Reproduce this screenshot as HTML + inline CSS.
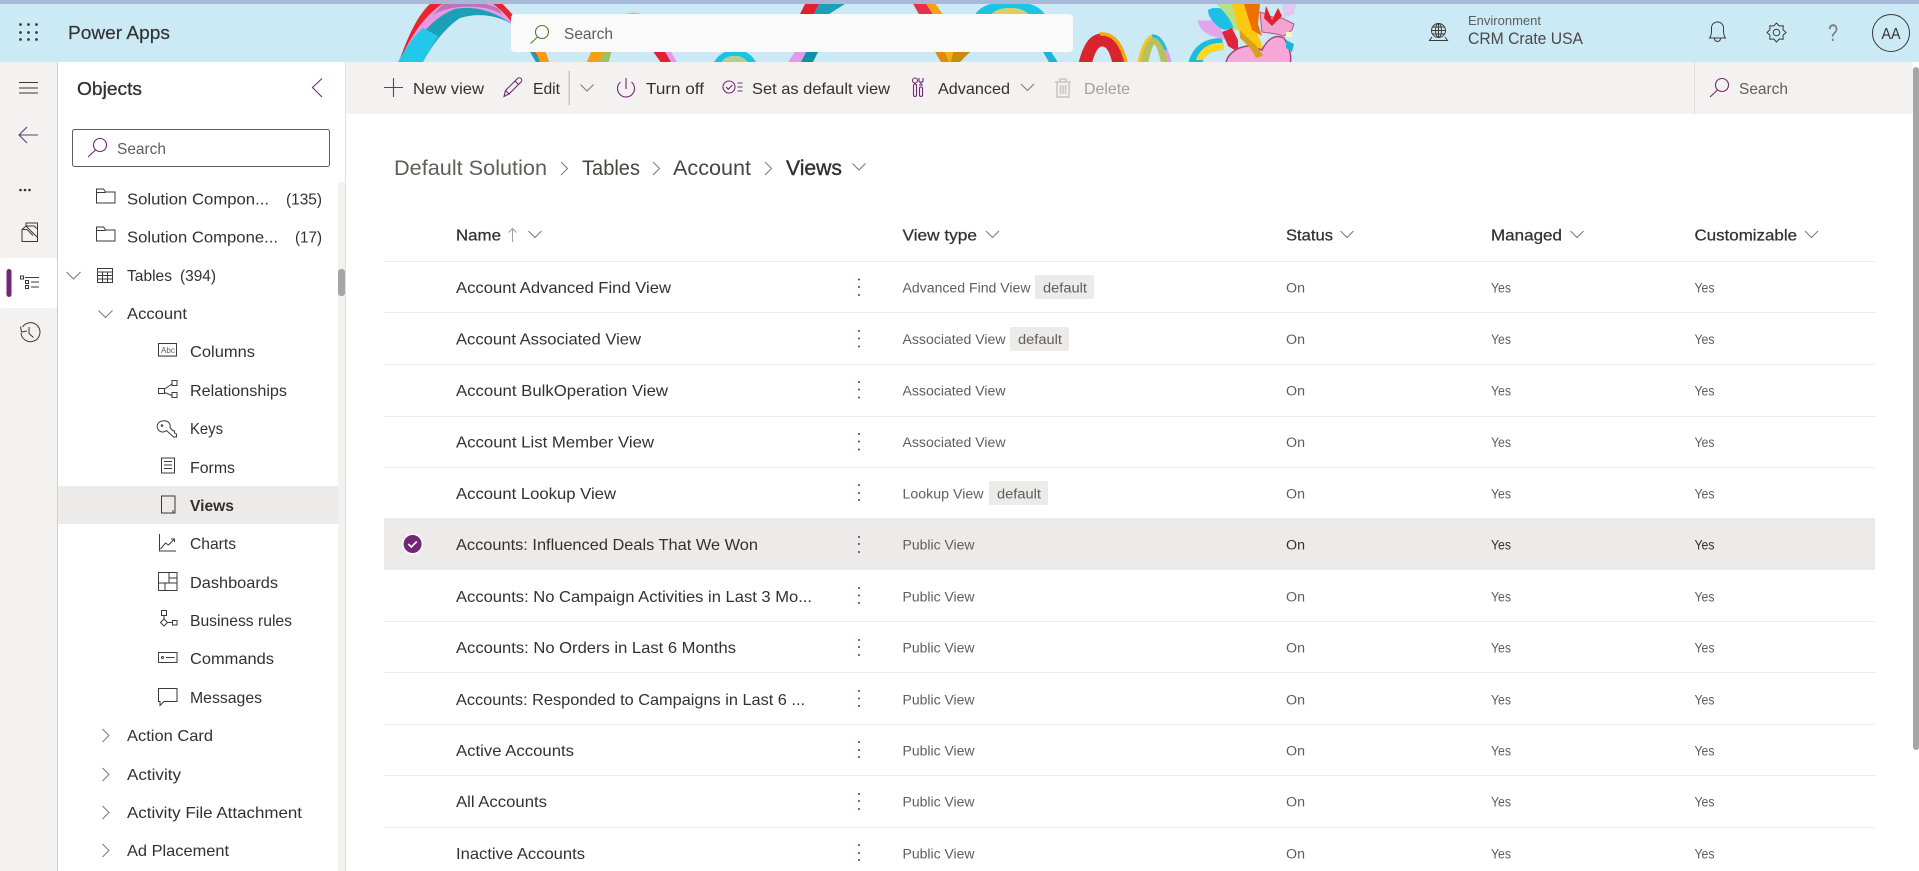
<!DOCTYPE html>
<html lang="en"><head><meta charset="utf-8"><title>Power Apps</title>
<style>
html,body{margin:0;padding:0;background:#fff;width:1919px;height:871px;overflow:hidden}
svg{display:block;font-family:"Liberation Sans",sans-serif}
.n{font-size:16px;fill:#323130}
.v{font-size:13.5px;fill:#605e5c}
.h{font-size:16px;fill:#323130;stroke:#323130;stroke-width:.25}
.t{font-size:16px;fill:#323130}
.i{fill:none;stroke:#3b3a39;stroke-width:1}
.p{fill:none;stroke:#742774;stroke-width:1.1}
.c{fill:none;stroke:#797775;stroke-width:1}
</style></head><body>
<svg width="1919" height="871" viewBox="0 0 1919 871" xmlns="http://www.w3.org/2000/svg">
<defs><clipPath id="hd"><rect x="0" y="4" width="1919" height="58"/></clipPath></defs>
<!-- header -->
<rect width="1919" height="62" fill="#cbeaf6"/>
<rect width="1919" height="4" fill="#a9b7d8"/>
<g clip-path="url(#hd)">
<path d="M396 70C408 35 420 8 438-2L495-2C505 5 520 20 530 45L552 75Z" fill="#e8242c"/>
<path d="M396 70C410 35 425 15 445 2L490 2C500 8 515 22 525 45L552 75Z" fill="#e69ae6"/>
<path d="M432 16C445 6 480 2 502 14L498 8L480 2L445 2Z" fill="#b878b8"/>
<path d="M398 70C412 45 430 18 455 9C475 5 495 12 512 24L552 75Z" fill="#1aa0b8"/>
<path d="M397 64C405 48 415 35 423 28L438 36L422 64Z" fill="#22c8ea"/>
<path d="M422 64C432 45 445 28 460 18C480 12 500 16 515 26L537 64Z" fill="#cbeaf6"/>
<path d="M535 50L541 64L550 64L545 50Z" fill="#ff9a10"/>
<path d="M586 64L592 50L604 50L598 64Z" fill="#f5a010"/><path d="M598 64L604 50L612 50L608 64Z" fill="#9fc060"/>
<path d="M652 50L662 64L674 64L664 50Z" fill="#e02030"/><path d="M672 64L664 50L670 50L678 64Z" fill="#e69ae6"/>
<path d="M622 15C630 12 638 12 644 15Z" fill="#e69ae6"/>
<path d="M713 64C718 54 726 50 735 50C745 50 752 54 757 64L749 64C745 58 741 56 735 56C728 56 723 58 721 64Z" fill="#1cc4e4"/>
<path d="M721 64C723 58 728 56 735 56C741 56 745 58 749 64Z" fill="#b8cf88"/>
<path d="M787 64L796 50L807 50L800 64Z" fill="#e69ae6"/><path d="M800 64L807 50L819 50L812 64Z" fill="#1090a8"/>
<path d="M799 16L806 2L820 2L813 16Z" fill="#e02030"/><path d="M813 16L820 2L848 2L826 16Z" fill="#1aa0b8"/>
<path d="M912 2L925 2L934 16L920 16Z" fill="#e8304c"/><path d="M925 2L934 2L944 16L934 16Z" fill="#f5a010"/>
<path d="M934 50L944 50L950 64L942 64Z" fill="#e08a10"/><path d="M944 50L954 50L950 64Z" fill="#f0b010"/><path d="M954 50L972 50L958 64L950 64Z" fill="#c98a10"/>
<path d="M974 16C980 6 990 2 1010 2C1030 2 1040 6 1046 16L1030 16C1026 10 1018 8 1010 8C1002 8 994 10 990 16Z" fill="#1cc4e4"/>
<path d="M990 16C994 10 1002 8 1010 8C1018 8 1026 10 1030 16Z" fill="#d8d060"/>
<path d="M1042 50L1050 50L1059 64L1050 64Z" fill="#1cb4d0"/>
<!-- small arcs -->
<path d="M1084 68C1089 46 1095 40 1102 40C1110 40 1116 46 1120 68" fill="none" stroke="#d8242c" stroke-width="13"/>
<path d="M1100 34C1114 33 1122 44 1127 66" fill="none" stroke="#f5a810" stroke-width="3.500"/>
<path d="M1143 68C1147 48 1150 40 1154 40C1159 40 1163 50 1166 68" fill="none" stroke="#b8c060" stroke-width="8"/>
<path d="M1152 36C1160 35 1166 46 1171 66" fill="none" stroke="#22bcd8" stroke-width="3"/>
<path d="M1138 66C1142 46 1147 38 1152 36" fill="none" stroke="#f5c820" stroke-width="3"/>
<path d="M1166 50L1171 66" stroke="#e69ae6" stroke-width="3" fill="none"/>
<!-- unicorn -->
<path d="M1188 64C1192 48 1202 38 1222 38L1224 50C1210 50 1204 56 1202 64Z" fill="#1cbce0"/>
<path d="M1196 60C1200 48 1210 42 1224 43L1224 50C1212 50 1206 54 1204 60Z" fill="#ffd820"/>
<path d="M1198 20C1206 22 1212 18 1218 22L1226 40L1212 36C1206 34 1198 28 1198 20Z" fill="#e4a4ec"/>
<path d="M1208 10C1214 6 1222 8 1230 12L1234 28L1224 30C1216 26 1208 18 1208 10Z" fill="#1cc0e4"/>
<path d="M1217 4L1240 4L1244 30L1234 30C1232 20 1224 12 1217 4Z" fill="#b8e088"/>
<path d="M1232 4L1246 4L1256 30L1264 50L1262 60L1252 52L1240 36Z" fill="#ffc810"/>
<path d="M1244 4L1260 4L1258 24L1262 36L1252 30Z" fill="#ee7000"/>
<path d="M1222 32L1232 28L1238 40L1238 52L1228 46Z" fill="#e0243c"/>
<path d="M1226 64C1226 56 1236 46 1250 46L1262 50C1268 38 1276 34 1284 38C1290 48 1292 58 1290 64Z" fill="#f8a8d8" stroke="#a04878" stroke-width="1.500"/>
<path d="M1240 30C1248 40 1258 44 1263 56L1256 58C1252 48 1244 42 1240 38Z" fill="#d8a020"/>
<path d="M1260 12C1268 14 1274 20 1282 18L1294 24L1292 30L1284 36L1276 34L1262 32Z" fill="#f0a4d0" stroke="#b05888" stroke-width="1"/>
<path d="M1266 6L1272 20L1278 8L1282 16L1272 26L1264 18Z" fill="#e0202c"/>
<path d="M1282 4L1296 4L1294 14L1284 18Z" fill="#e0c8f0"/>
<rect x="1286" y="32" width="6" height="5" fill="#fff3c0"/>
<path d="M1286 40L1294 44L1292 52L1286 48Z" fill="#22b0d8"/>
</g>
<rect x="511" y="14" width="562" height="38" rx="4" fill="#fafafa"/>
<!-- waffle -->
<g fill="#3b3a39"><circle cx="20.500" cy="24.500" r="1.400"/><circle cx="28.500" cy="24.500" r="1.400"/><circle cx="36.500" cy="24.500" r="1.400"/><circle cx="20.500" cy="32.500" r="1.400"/><circle cx="28.500" cy="32.500" r="1.400"/><circle cx="36.500" cy="32.500" r="1.400"/><circle cx="20.500" cy="39.500" r="1.400"/><circle cx="28.500" cy="39.500" r="1.400"/><circle cx="36.500" cy="39.500" r="1.400"/></g>
<text x="68" y="39" font-size="18.500" fill="#323130" stroke="#323130" stroke-width=".15" textLength="102" lengthAdjust="spacingAndGlyphs">Power Apps</text>
<!-- search top -->
<g fill="none" stroke="#4a7a30" stroke-width="1.100"><circle cx="542" cy="32" r="6.500"/><path d="M537.500 37L530.500 43.500"/></g>
<text x="564" y="39" font-size="16" fill="#605e5c" textLength="49" lengthAdjust="spacingAndGlyphs">Search</text>
<!-- env -->
<g class="i"><circle cx="1438.500" cy="30.500" r="7"/><ellipse cx="1438.500" cy="30.500" rx="3" ry="7"/><path d="M1431.500 30.500h14M1432.500 27h12M1432.500 34h12M1438.500 23.500v14M1432 37l-2.500 3.500h18l-2.500-3.500"/></g>
<text x="1468" y="25" font-size="12.500" fill="#605e5c" textLength="73" lengthAdjust="spacingAndGlyphs">Environment</text>
<text x="1468" y="44" font-size="17" fill="#4a4846" textLength="115" lengthAdjust="spacingAndGlyphs">CRM Crate USA</text>
<g class="i"><path d="M1709.500 38h16c-1.500-2-2-4-2-7v-3c0-3.500-2.500-6-6-6s-6 2.500-6 6v3c0 3-.5 5-2 7zM1714.500 38.500a3 3 0 0 0 6 0"/></g>
<g class="i" transform="translate(1776.500 32.500)"><path stroke-linejoin="round" d="M0-9.500L2.700-6.500L6.700-6.700L6.500-2.700L9.500 0L6.500 2.700L6.700 6.700L2.700 6.500L0 9.500L-2.700 6.500L-6.700 6.700L-6.500 2.700L-9.500 0L-6.500-2.700L-6.700-6.700L-2.700-6.500Z"/><circle r="3.300"/></g>
<text x="1828" y="41" font-size="24" fill="#7a7876" textLength="10" lengthAdjust="spacingAndGlyphs">?</text>
<circle cx="1891" cy="33" r="18.500" fill="none" stroke="#3b3a39" stroke-width="1"/>
<text x="1881.500" y="39" font-size="16" fill="#323130" textLength="19" lengthAdjust="spacingAndGlyphs">AA</text>
<!-- left rail -->
<rect x="0" y="62" width="57" height="809" fill="#f3f2f1"/>
<rect x="57" y="62" width="1" height="809" fill="#d2d0ce"/>
<rect x="0" y="258" width="57" height="50" rx="3" fill="#fff"/>
<rect x="6.500" y="269" width="5" height="28" rx="2.500" fill="#742774"/>
<path class="i" d="M19 82.500h19M19 88h19M19 93h19"/>
<path class="p" style="stroke:#5e3f73" d="M38 135H19.500M27 127l-8 8 8 8"/>
<g fill="#323130"><circle cx="20.500" cy="190" r="1.300"/><circle cx="25" cy="190" r="1.300"/><circle cx="29.500" cy="190" r="1.300"/></g>
<g class="i"><path d="M26 226v-3h11.500v19"/><path d="M22 229.500l4-3.500h8l3.500 3v12.500h-15.500zM26 226l11 11M22 229.500h5l6 6"/></g>
<g class="i"><rect x="20.500" y="276" width="3" height="3"/><rect x="25.500" y="280.500" width="3" height="3"/><rect x="25.500" y="285.500" width="3" height="3"/><path d="M25 277.500h14M31 282h8M31 287h8"/></g>
<g class="i"><path d="M22.500 327a9.500 9.500 0 1 1-1.500 6M20.500 326.500l1 5.500 5.500-1M29 327v6.500l4.500 4"/></g>
<!-- object panel -->
<text x="77" y="95" font-size="18.500" fill="#323130" stroke="#323130" stroke-width=".3" textLength="65" lengthAdjust="spacingAndGlyphs">Objects</text>
<path class="p" d="M322 78.500L312.500 87.500L322 97"/>
<rect x="72.500" y="129.500" width="257" height="37" rx="2" fill="#fff" stroke="#605e5c"/>
<g class="p"><circle cx="100" cy="145" r="6.500"/><path d="M95.500 150L88 157"/></g>
<text x="117" y="154" class="t" style="fill:#605e5c" textLength="49" lengthAdjust="spacingAndGlyphs">Search</text>
<rect x="338" y="182" width="7" height="689" fill="#f3f2f1"/>
<rect x="345" y="62" width="1" height="809" fill="#e1dfdd"/>
<rect x="338" y="269" width="7" height="27" rx="3" fill="#a6a6a6"/>
<g class="i"><path d="M96.500 203v-14h7l2 3h9.500v11zM96.500 192.500h9"/><path d="M96.500 241v-14h7l2 3h9.500v11zM96.500 230.500h9"/></g>
<g class="i" stroke-width="1"><rect x="97.500" y="268.500" width="15" height="14"/><path d="M97.500 272h15M97.500 275.500h15M97.500 279h15M102.500 272v10.500M107.500 272v10.500"/></g>
<text x="127" y="204.500" class="t" textLength="142" lengthAdjust="spacingAndGlyphs">Solution Compon...</text>
<text x="286" y="204.500" class="t" textLength="36" lengthAdjust="spacingAndGlyphs">(135)</text>
<text x="127" y="242.500" class="t" textLength="151" lengthAdjust="spacingAndGlyphs">Solution Compone...</text>
<text x="295" y="242.500" class="t" textLength="27" lengthAdjust="spacingAndGlyphs">(17)</text>
<text x="127" y="281" class="t" textLength="45" lengthAdjust="spacingAndGlyphs">Tables</text>
<text x="180" y="281" class="t" textLength="36" lengthAdjust="spacingAndGlyphs">(394)</text>
<path class="c" d="M66.500 272l7 7 7-7M98.500 310.500l7 7 7-7"/>
<text x="127" y="319" class="t" textLength="60" lengthAdjust="spacingAndGlyphs">Account</text>
<rect x="58" y="486" width="280" height="38" fill="#edebe9"/>
<text x="190" y="357" class="t" textLength="65" lengthAdjust="spacingAndGlyphs">Columns</text>
<text x="190" y="396" class="t" textLength="97" lengthAdjust="spacingAndGlyphs">Relationships</text>
<text x="190" y="434" class="t" textLength="33" lengthAdjust="spacingAndGlyphs">Keys</text>
<text x="190" y="473" class="t" textLength="45" lengthAdjust="spacingAndGlyphs">Forms</text>
<text x="190" y="511" class="t" font-weight="700" textLength="44" lengthAdjust="spacingAndGlyphs">Views</text>
<text x="190" y="549" class="t" textLength="46" lengthAdjust="spacingAndGlyphs">Charts</text>
<text x="190" y="588" class="t" textLength="88" lengthAdjust="spacingAndGlyphs">Dashboards</text>
<text x="190" y="626" class="t" textLength="102" lengthAdjust="spacingAndGlyphs">Business rules</text>
<text x="190" y="664" class="t" textLength="84" lengthAdjust="spacingAndGlyphs">Commands</text>
<text x="190" y="703" class="t" textLength="72" lengthAdjust="spacingAndGlyphs">Messages</text>
<text x="127" y="741" class="t" textLength="86" lengthAdjust="spacingAndGlyphs">Action Card</text>
<text x="127" y="780" class="t" textLength="54" lengthAdjust="spacingAndGlyphs">Activity</text>
<text x="127" y="818" class="t" textLength="175" lengthAdjust="spacingAndGlyphs">Activity File Attachment</text>
<text x="127" y="856" class="t" textLength="102" lengthAdjust="spacingAndGlyphs">Ad Placement</text>
<path class="c" d="M102.500 729l6.500 6.500-6.500 6.500M102.500 768l6.500 6.500-6.500 6.500M102.500 806l6.500 6.500-6.500 6.500M102.500 844l6.500 6.500-6.500 6.500"/>
<!-- tree icons -->
<g class="i">
<rect x="158.500" y="343.500" width="18" height="12.500"/><path d="M158.500 356.500h18" stroke="#8a8886"/>
<path d="M158.500 388.500h6v5h-6zM172 380.500h5v5h-5zM172 392.500h5v5h-5zM164.500 389l7.500-5M164.500 392.500l7.500 3"/>
<path d="M163 421a5.500 5.500 0 1 0 3.500 9.500l7 6.500h3v-3l-2-1v-2l-2 -.5-2.500-3a5.500 5.500 0 0 0-7-6.500z"/><circle cx="162" cy="425.500" r=".8"/>
<rect x="161.500" y="458" width="13" height="15"/><path d="M164 461.500h8M164 465h8M164 468.500h8"/>
<path d="M161.500 496h13.500v17h-13.500zM173 513v-3"/>
<path d="M159.500 534v17h16.500M160.500 549l5-6 3 2 6-6M171 539h3.500v3"/>
<path d="M158.500 572.500h18.500v18h-18.500zM158.500 583h18.500M169 572.500v10.500M169 578h8M165 583v7.500"/>
<path d="M161.500 610.500h5v5h-5zM164 615.500v4M164 619l3.500 3.500-3.500 3.500-3.500-3.500zM167.500 622.500h5M172.500 620.500h4.500v4.500h-4.500z"/>
<rect x="158.500" y="652.500" width="18.500" height="10"/><circle cx="162.500" cy="657.500" r="1"/><path d="M166 657.500h8.500"/>
<path d="M158.500 688.500h18.500v13h-13l-4 4v-4h-1.500z"/>
</g>
<text x="161" y="353" font-size="8" fill="#605e5c" textLength="14" lengthAdjust="spacingAndGlyphs">Abc</text>
<!-- toolbar -->
<rect x="346" y="62" width="1567" height="52" fill="#f3f2f1"/>
<rect x="1694" y="62" width="1" height="52" fill="#e1dfdd"/>
<path d="M393.500 78v19M384 87.500h19" fill="none" stroke="#5e3f73" stroke-width="1.100"/>
<text x="413" y="94" class="t" textLength="71" lengthAdjust="spacingAndGlyphs">New view</text>
<path class="p" d="M504 96.500l1.500-6 12-12c1-1 2.500-1 3.500 0s1 2.500 0 3.500l-12 12zM515 81l3.500 3.500M505.500 90.500l4 4"/>
<text x="533" y="94" class="t" textLength="27" lengthAdjust="spacingAndGlyphs">Edit</text>
<rect x="568.500" y="71" width="1.500" height="34" fill="#c8c6c4"/>
<path class="c" d="M580.500 84.500l6.500 6.500 6.500-6.500"/>
<path class="p" d="M620.500 82a8.500 8.500 0 1 0 11 0M626 78v11"/>
<text x="646" y="94" class="t" textLength="58" lengthAdjust="spacingAndGlyphs">Turn off</text>
<g class="p"><circle cx="729" cy="87" r="6"/><path d="M726 87l2.300 2.300 4-4.300"/></g>
<path d="M737.500 83h5M737.500 87h5M737.500 91h5" stroke="#5e3f73" stroke-width="1.100" fill="none"/>
<text x="752" y="94" class="t" textLength="138" lengthAdjust="spacingAndGlyphs">Set as default view</text>
<g class="p"><circle cx="915" cy="80.500" r="2.500"/><rect x="913.500" y="84" width="3" height="12.500" rx="1.500"/><path d="M919 78v3c0 1.500 4 1.500 4 0v-3M921 82v3M919 85h4"/><rect x="919.500" y="87" width="3" height="9.500" rx="1.500"/></g>
<text x="938" y="94" class="t" textLength="72" lengthAdjust="spacingAndGlyphs">Advanced</text>
<path class="c" d="M1021 84l6.500 6.500 6.500-6.500"/>
<g fill="none" stroke="#c8c6c4" stroke-width="1.500"><path d="M1055 82h16M1057 82v15h12V82M1060 82v-3h6v3M1060.500 85v9M1063 85v9M1065.500 85v9"/></g>
<text x="1084" y="94" class="t" style="fill:#a19f9d" textLength="46" lengthAdjust="spacingAndGlyphs">Delete</text>
<g class="p"><circle cx="1722" cy="85" r="6.500"/><path d="M1717.500 90L1710 97"/></g>
<text x="1739" y="94" class="t" style="fill:#605e5c" textLength="49" lengthAdjust="spacingAndGlyphs">Search</text>
<!-- page scrollbar -->
<rect x="1913" y="67" width="6" height="683" rx="3" fill="#a6a6a6"/>
<!-- breadcrumb -->
<text x="394" y="175" font-size="21" fill="#605e5c" textLength="153" lengthAdjust="spacingAndGlyphs">Default Solution</text>
<path class="c" d="M561 162l6.500 6.500-6.500 6.500M653 162l6.500 6.500-6.500 6.500M765 162l6.500 6.500-6.500 6.500M852.500 163.500l6.500 6.500 6.500-6.500"/>
<text x="582" y="175" font-size="21" fill="#484644" textLength="58" lengthAdjust="spacingAndGlyphs">Tables</text>
<text x="673" y="175" font-size="21" fill="#484644" textLength="78" lengthAdjust="spacingAndGlyphs">Account</text>
<text x="786" y="175" font-size="21" fill="#323130" stroke="#323130" stroke-width=".4" textLength="56" lengthAdjust="spacingAndGlyphs">Views</text>
<!-- column header -->
<text x="456" y="240.500" class="h" textLength="45" lengthAdjust="spacingAndGlyphs">Name</text>
<path d="M512.500 242v-13.500M508.500 232.500l4-4 4 4" fill="none" stroke="#a19f9d"/>
<path class="c" d="M528.500 231l6.500 6.500 6.500-6.500"/>
<text x="902.500" y="240.500" class="h" textLength="74.500" lengthAdjust="spacingAndGlyphs">View type</text>
<path class="c" d="M986 231l6.500 6.500 6.500-6.500"/>
<text x="1286" y="240.500" class="h" textLength="47" lengthAdjust="spacingAndGlyphs">Status</text>
<path class="c" d="M1340.500 231l6.500 6.500 6.500-6.500"/>
<text x="1491" y="240.500" class="h" textLength="71" lengthAdjust="spacingAndGlyphs">Managed</text>
<path class="c" d="M1570.500 231l6.500 6.500 6.500-6.500"/>
<text x="1694.500" y="240.500" class="h" textLength="102.500" lengthAdjust="spacingAndGlyphs">Customizable</text>
<path class="c" d="M1805 231l6.500 6.500 6.500-6.500"/>
<!-- row lines -->
<g fill="#edebe9">
<rect x="384" y="261" width="1491" height="1"/><rect x="384" y="312" width="1491" height="1"/><rect x="384" y="364" width="1491" height="1"/><rect x="384" y="416" width="1491" height="1"/><rect x="384" y="467" width="1491" height="1"/>
<rect x="384" y="518" width="1491" height="52"/>
<rect x="384" y="621" width="1491" height="1"/><rect x="384" y="672" width="1491" height="1"/><rect x="384" y="724" width="1491" height="1"/><rect x="384" y="775" width="1491" height="1"/><rect x="384" y="827" width="1491" height="1"/>
</g>
<!-- row names -->
<text x="456" y="293" class="n" textLength="215" lengthAdjust="spacingAndGlyphs">Account Advanced Find View</text>
<text x="456" y="344.500" class="n" textLength="185" lengthAdjust="spacingAndGlyphs">Account Associated View</text>
<text x="456" y="396" class="n" textLength="212" lengthAdjust="spacingAndGlyphs">Account BulkOperation View</text>
<text x="456" y="447.500" class="n" textLength="198" lengthAdjust="spacingAndGlyphs">Account List Member View</text>
<text x="456" y="499" class="n" textLength="160" lengthAdjust="spacingAndGlyphs">Account Lookup View</text>
<text x="456" y="550" class="n" textLength="302" lengthAdjust="spacingAndGlyphs">Accounts: Influenced Deals That We Won</text>
<text x="456" y="602" class="n" textLength="356" lengthAdjust="spacingAndGlyphs">Accounts: No Campaign Activities in Last 3 Mo...</text>
<text x="456" y="653" class="n" textLength="280" lengthAdjust="spacingAndGlyphs">Accounts: No Orders in Last 6 Months</text>
<text x="456" y="705" class="n" textLength="349" lengthAdjust="spacingAndGlyphs">Accounts: Responded to Campaigns in Last 6 ...</text>
<text x="456" y="756" class="n" textLength="118" lengthAdjust="spacingAndGlyphs">Active Accounts</text>
<text x="456" y="807" class="n" textLength="91" lengthAdjust="spacingAndGlyphs">All Accounts</text>
<text x="456" y="859" class="n" textLength="129" lengthAdjust="spacingAndGlyphs">Inactive Accounts</text>
<!-- check -->
<circle cx="412.600" cy="544" r="10.500" fill="#fff"/><circle cx="412.600" cy="544" r="9" fill="#742774"/>
<path d="M408.300 544l3 3 5.500-5.500" fill="none" stroke="#fff" stroke-width="1.600"/>
<!-- kebabs -->
<g fill="#6b2a6b">
<circle cx="859" cy="279.500" r="1"/><circle cx="859" cy="287" r="1"/><circle cx="859" cy="295" r="1"/>
<circle cx="859" cy="331" r="1"/><circle cx="859" cy="338.500" r="1"/><circle cx="859" cy="346.500" r="1"/>
<circle cx="859" cy="382" r="1"/><circle cx="859" cy="389.500" r="1"/><circle cx="859" cy="397.500" r="1"/>
<circle cx="859" cy="434" r="1"/><circle cx="859" cy="441.500" r="1"/><circle cx="859" cy="449.500" r="1"/>
<circle cx="859" cy="485" r="1"/><circle cx="859" cy="493" r="1"/><circle cx="859" cy="500" r="1"/>
<circle cx="859" cy="537" r="1"/><circle cx="859" cy="544" r="1"/><circle cx="859" cy="552" r="1"/>
<circle cx="859" cy="588" r="1"/><circle cx="859" cy="595.500" r="1"/><circle cx="859" cy="603" r="1"/>
<circle cx="859" cy="640" r="1"/><circle cx="859" cy="647" r="1"/><circle cx="859" cy="655" r="1"/>
<circle cx="859" cy="691" r="1"/><circle cx="859" cy="698.500" r="1"/><circle cx="859" cy="706" r="1"/>
<circle cx="859" cy="742" r="1"/><circle cx="859" cy="750" r="1"/><circle cx="859" cy="757" r="1"/>
<circle cx="859" cy="794" r="1"/><circle cx="859" cy="801" r="1"/><circle cx="859" cy="809" r="1"/>
<circle cx="859" cy="845" r="1"/><circle cx="859" cy="853" r="1"/><circle cx="859" cy="860" r="1"/>
</g>
<!-- view type -->
<text x="902.500" y="292.500" class="v" textLength="128" lengthAdjust="spacingAndGlyphs">Advanced Find View</text>
<rect x="1035" y="275" width="59" height="24" rx="2" fill="#edebe9"/><text x="1043" y="292.500" class="v" textLength="44" lengthAdjust="spacingAndGlyphs">default</text>
<text x="902.500" y="344" class="v" textLength="103" lengthAdjust="spacingAndGlyphs">Associated View</text>
<rect x="1010" y="327" width="59" height="24" rx="2" fill="#edebe9"/><text x="1018" y="344" class="v" textLength="44" lengthAdjust="spacingAndGlyphs">default</text>
<text x="902.500" y="395.500" class="v" textLength="103" lengthAdjust="spacingAndGlyphs">Associated View</text>
<text x="902.500" y="447" class="v" textLength="103" lengthAdjust="spacingAndGlyphs">Associated View</text>
<text x="902.500" y="498.500" class="v" textLength="81" lengthAdjust="spacingAndGlyphs">Lookup View</text>
<rect x="989" y="481" width="59" height="24" rx="2" fill="#edebe9"/><text x="997" y="498.500" class="v" textLength="44" lengthAdjust="spacingAndGlyphs">default</text>
<text x="902.500" y="549.500" class="v" textLength="72" lengthAdjust="spacingAndGlyphs">Public View</text>
<text x="902.500" y="601.500" class="v" textLength="72" lengthAdjust="spacingAndGlyphs">Public View</text>
<text x="902.500" y="652.500" class="v" textLength="72" lengthAdjust="spacingAndGlyphs">Public View</text>
<text x="902.500" y="704.500" class="v" textLength="72" lengthAdjust="spacingAndGlyphs">Public View</text>
<text x="902.500" y="755.500" class="v" textLength="72" lengthAdjust="spacingAndGlyphs">Public View</text>
<text x="902.500" y="806.500" class="v" textLength="72" lengthAdjust="spacingAndGlyphs">Public View</text>
<text x="902.500" y="858.500" class="v" textLength="72" lengthAdjust="spacingAndGlyphs">Public View</text>
<!-- status / managed / customizable -->
<g class="v" lengthAdjust="spacingAndGlyphs">
<text x="1286" y="292.500" textLength="19" lengthAdjust="spacingAndGlyphs">On</text><text x="1491" y="292.500" textLength="20" lengthAdjust="spacingAndGlyphs">Yes</text><text x="1694.500" y="292.500" textLength="20" lengthAdjust="spacingAndGlyphs">Yes</text>
<text x="1286" y="344" textLength="19" lengthAdjust="spacingAndGlyphs">On</text><text x="1491" y="344" textLength="20" lengthAdjust="spacingAndGlyphs">Yes</text><text x="1694.500" y="344" textLength="20" lengthAdjust="spacingAndGlyphs">Yes</text>
<text x="1286" y="395.500" textLength="19" lengthAdjust="spacingAndGlyphs">On</text><text x="1491" y="395.500" textLength="20" lengthAdjust="spacingAndGlyphs">Yes</text><text x="1694.500" y="395.500" textLength="20" lengthAdjust="spacingAndGlyphs">Yes</text>
<text x="1286" y="447" textLength="19" lengthAdjust="spacingAndGlyphs">On</text><text x="1491" y="447" textLength="20" lengthAdjust="spacingAndGlyphs">Yes</text><text x="1694.500" y="447" textLength="20" lengthAdjust="spacingAndGlyphs">Yes</text>
<text x="1286" y="498.500" textLength="19" lengthAdjust="spacingAndGlyphs">On</text><text x="1491" y="498.500" textLength="20" lengthAdjust="spacingAndGlyphs">Yes</text><text x="1694.500" y="498.500" textLength="20" lengthAdjust="spacingAndGlyphs">Yes</text>
<text x="1286" y="549.500" textLength="19" lengthAdjust="spacingAndGlyphs" style="fill:#323130">On</text><text x="1491" y="549.500" textLength="20" lengthAdjust="spacingAndGlyphs" style="fill:#323130">Yes</text><text x="1694.500" y="549.500" textLength="20" lengthAdjust="spacingAndGlyphs" style="fill:#323130">Yes</text>
<text x="1286" y="601.500" textLength="19" lengthAdjust="spacingAndGlyphs">On</text><text x="1491" y="601.500" textLength="20" lengthAdjust="spacingAndGlyphs">Yes</text><text x="1694.500" y="601.500" textLength="20" lengthAdjust="spacingAndGlyphs">Yes</text>
<text x="1286" y="652.500" textLength="19" lengthAdjust="spacingAndGlyphs">On</text><text x="1491" y="652.500" textLength="20" lengthAdjust="spacingAndGlyphs">Yes</text><text x="1694.500" y="652.500" textLength="20" lengthAdjust="spacingAndGlyphs">Yes</text>
<text x="1286" y="704.500" textLength="19" lengthAdjust="spacingAndGlyphs">On</text><text x="1491" y="704.500" textLength="20" lengthAdjust="spacingAndGlyphs">Yes</text><text x="1694.500" y="704.500" textLength="20" lengthAdjust="spacingAndGlyphs">Yes</text>
<text x="1286" y="755.500" textLength="19" lengthAdjust="spacingAndGlyphs">On</text><text x="1491" y="755.500" textLength="20" lengthAdjust="spacingAndGlyphs">Yes</text><text x="1694.500" y="755.500" textLength="20" lengthAdjust="spacingAndGlyphs">Yes</text>
<text x="1286" y="806.500" textLength="19" lengthAdjust="spacingAndGlyphs">On</text><text x="1491" y="806.500" textLength="20" lengthAdjust="spacingAndGlyphs">Yes</text><text x="1694.500" y="806.500" textLength="20" lengthAdjust="spacingAndGlyphs">Yes</text>
<text x="1286" y="858.500" textLength="19" lengthAdjust="spacingAndGlyphs">On</text><text x="1491" y="858.500" textLength="20" lengthAdjust="spacingAndGlyphs">Yes</text><text x="1694.500" y="858.500" textLength="20" lengthAdjust="spacingAndGlyphs">Yes</text>
</g>
</svg>
</body></html>
